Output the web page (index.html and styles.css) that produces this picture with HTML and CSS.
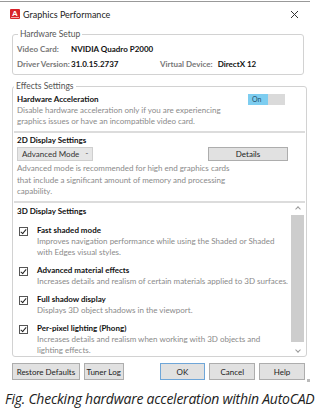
FILE: index.html
```html
<!DOCTYPE html>
<html lang="en">
<head>
<meta charset="UTF-8">
<title>Graphics Performance</title>
<link rel="stylesheet" href="styles.css">
</head>
<body>
<div class="dialog">
  <div class="titlebar">
    <svg class="appIcon" width="10" height="10" viewBox="0 0 10 10">
      <rect width="10" height="10" rx="1" fill="#d8232a"/>
      <rect x="1" y="8" width="8" height="1" fill="#fff" opacity="0.6"/>
      <text x="5" y="7.3" font-family="Liberation Sans" font-weight="bold" font-size="8" fill="#fff" text-anchor="middle">A</text>
    </svg>
    <span class="title">Graphics Performance</span>
    <svg class="close" width="9" height="9" viewBox="0 0 9 9">
      <path d="M1 1L8 8M8 1L1 8" stroke="#333" stroke-width="1"/>
    </svg>
  </div>

  <fieldset class="group hw">
    <legend>Hardware Setup</legend>
    <div class="row">
      <span class="key">Video Card:</span><span class="val">NVIDIA Quadro P2000</span>
    </div>
    <div class="row">
      <span class="key">Driver Version:</span><span class="val driver">31.0.15.2737</span>
      <span class="key vd">Virtual Device:</span><span class="val">DirectX 12</span>
    </div>
  </fieldset>

  <fieldset class="group effects">
    <legend>Effects Settings</legend>
    <div class="sect accel">
      <div class="accelHead">
        <span class="head">Hardware Acceleration</span>
        <span class="toggle"><span class="on">On</span><span class="off"></span></span>
      </div>
      <p class="desc">Disable hardware acceleration only if you are experiencing<br>graphics issues or have an incompatible video card.</p>
    </div>
    <div class="sect twoD">
      <div class="head">2D Display Settings</div>
      <div class="controls">
        <span class="select">Advanced Mode <span class="chev">&#711;</span></span>
        <span class="btn details">Details</span>
      </div>
      <p class="desc tall">Advanced mode is recommended for high end graphics cards<br>that include a significant amount of memory and processing<br>capability.</p>
    </div>
    <div class="scrollArea">
      <div class="scrollContent">
        <div class="head">3D Display Settings</div>
        <div class="items">
          <div class="item">
            <span class="check"></span>
            <div>
              <div class="head">Fast shaded mode</div>
              <p class="desc">Improves navigation performance while using the Shaded or Shaded<br>with Edges visual styles.</p>
            </div>
          </div>
          <div class="item">
            <span class="check"></span>
            <div>
              <div class="head">Advanced material effects</div>
              <p class="desc">Increases details and realism of certain materials applied to 3D surfaces.</p>
            </div>
          </div>
          <div class="item">
            <span class="check"></span>
            <div>
              <div class="head">Full shadow display</div>
              <p class="desc">Displays 3D object shadows in the viewport.</p>
            </div>
          </div>
          <div class="item">
            <span class="check"></span>
            <div>
              <div class="head">Per-pixel lighting (Phong)</div>
              <p class="desc">Increases details and realism when working with 3D objects and<br>lighting effects.</p>
            </div>
          </div>
        </div>
      </div>
      <div class="scrollbar">
        <span class="arrow up"></span>
        <span class="thumb"></span>
        <span class="arrow down"></span>
      </div>
    </div>
  </fieldset>

  <div class="buttons">
    <span class="btn restore">Restore Defaults</span>
    <span class="btn tuner">Tuner Log</span>
    <span class="spacer"></span>
    <span class="btn ok">OK</span>
    <span class="btn">Cancel</span>
    <span class="btn">Help</span>
  </div>
  <span class="grip"></span>
</div>
<p class="caption">Fig. Checking hardware acceleration within AutoCAD</p>
</body>
</html>
```

FILE: styles.css
```css
body{margin:0; background:#fff; font-family:Lato,"Open Sans",sans-serif; font-size:8px; color:#222;}
p{margin:0;}

.dialog{position:relative; width:310px; margin-top:1px; border-top:1px solid #999; padding:0 6px 0 12px; box-sizing:border-box;}

.titlebar{height:24px; display:flex; align-items:center; margin-left:-2px;}
.appIcon{margin-right:3px;}
.title{font-size:9px; color:#222; flex:1;}
.close{margin-right:5px;}

.group{margin:0; border:1px solid #d2d2d2; border-radius:3px; padding:0;}
.group legend{font-size:8.5px; color:#555; padding:0 2px; margin-left:1px; line-height:10px;}

.hw{padding:2px 4px 3px; margin-top:3px;}
.hw .row{height:15px; display:flex; align-items:center; white-space:nowrap;}
.hw .key{color:#777; font-weight:bold; width:54px; flex:none;}
.hw .val{font-weight:bold; color:#111;}
.hw .driver{width:47px; flex:none;}
.hw .vd{margin-left:42px; width:auto; margin-right:5px;}

.effects{margin-top:6px; height:276px; box-sizing:border-box; overflow:hidden;}

.head{font-weight:bold; color:#111; line-height:11px;}
.desc{color:#8a8a8a; line-height:11.5px; white-space:nowrap;}

.sect{padding:3px 3px 4px; border-bottom:2px solid #dcdcdc; margin:0 1px;}
.accelHead{display:flex; justify-content:space-between; align-items:center;}
.toggle{display:flex; height:11px; width:37px; margin-right:17px;}
.toggle .on{width:20px; background:#7dcdf0; color:#24506a; font-size:7px; line-height:11px; padding-left:4px; box-sizing:border-box;}
.toggle .off{flex:1; background:#dadada;}
.accel .desc{line-height:11px;}

.twoD{padding-top:2px; padding-bottom:3px;}
.controls{display:flex; justify-content:space-between; align-items:center; margin:1px 14px 2px 0;}
.select{display:inline-flex; align-items:center; height:14px; width:76px; box-sizing:border-box; background:#e6e6e6; border:1px solid #cfcfcf; padding-left:4px; color:#333;}
.chev{font-size:8px; margin-left:6px; color:#555; line-height:6px; padding-top:3px;}

.btn{display:inline-flex; align-items:center; justify-content:center; height:17px; box-sizing:border-box; background:#e1e1e1; border:1px solid #adadad; color:#222;}
.details{width:80px; height:14px;}

.scrollArea{display:flex; height:153px; margin:0 1px; overflow:hidden;}
.scrollContent{flex:1; padding:3px 3px 0;}
.scrollContent > .head{line-height:11px;}
.items{margin-top:8px; display:flex; flex-direction:column; gap:7px;}
.item{display:flex; align-items:flex-start;}
.item .desc{line-height:11px;}
.check{position:relative; width:9px; height:9px; border:1px solid #555; box-sizing:border-box; margin:2px 9px 0 2px; flex:none;}
.check::after{content:""; position:absolute; left:2px; top:0; width:2px; height:5px; border:solid #222; border-width:0 1px 1px 0; transform:rotate(40deg);}

.scrollbar{width:13px; display:flex; flex-direction:column; align-items:stretch; margin-right:1px;}
.arrow{height:10px; position:relative;}
.arrow::after{content:""; position:absolute; left:5px; width:3px; height:3px; border:solid #999; border-width:1px 0 0 1px;}
.arrow.up::after{top:4px; transform:rotate(45deg);}
.arrow.down::after{top:2px; transform:rotate(225deg);}
.thumb{flex:1; background:#cdcdcd; margin:2px 0 4px;}

.buttons{display:flex; gap:4px; margin-top:6px; margin-right:-1px;}
.buttons .btn{width:46px;}
.buttons .restore{width:68px;}
.buttons .tuner{width:40px;}
.buttons .ok{border-color:#6fa6d8;}
.spacer{width:28px;}

.grip{position:absolute; right:0; bottom:-2px; width:3px; height:3px; background:#bbb;}

.caption{font-family:"Open Sans",sans-serif; font-style:italic; font-size:14px; letter-spacing:-0.25px; color:#222; margin:9px 0 0 5px; white-space:nowrap;}
```
